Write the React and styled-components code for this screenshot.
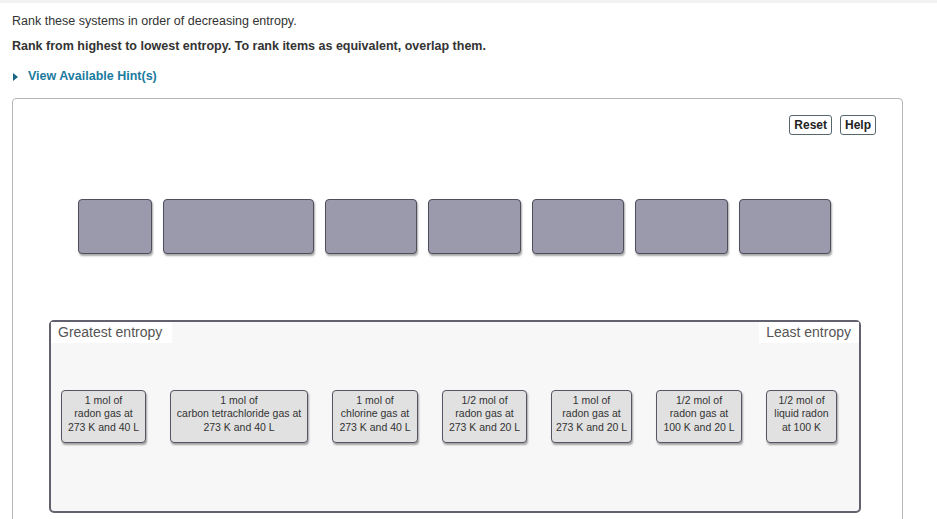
import React from "react";
import styled, { createGlobalStyle } from "styled-components";

const Global = createGlobalStyle`
  html, body { margin: 0; padding: 0; background: #fff; }
  body { font-family: "Liberation Sans", Arial, Helvetica, sans-serif; color: #333; }
  * { box-sizing: border-box; }
`;

const TopStrip = styled.div`
  height: 3px;
  background: #f2f2f2;
`;

const Content = styled.div`
  padding: 0 34px 0 12px;
`;

const Prompt = styled.p`
  margin: ${(p) => p.$mt}px 0 0;
  font-size: 12.5px;
  line-height: 15px;
  font-weight: ${(p) => (p.$bold ? 700 : 400)};
  color: #333;
`;

const Hint = styled.div`
  margin-top: 15px;
  display: flex;
  align-items: center;
  gap: 10px;
  font-size: 12.5px;
  line-height: 15px;
  font-weight: 700;
  color: #1b7b9f;
`;

const Triangle = styled.span`
  width: 0;
  height: 0;
  margin-left: 1px;
  border-top: 4.5px solid transparent;
  border-bottom: 4.5px solid transparent;
  border-left: 5px solid #1a6485;
`;

const Panel = styled.div`
  margin-top: 14px;
  border: 1px solid #b5b5b5;
  border-radius: 4px;
  padding: 16px 26px 30px 36px;
`;

const Toolbar = styled.div`
  display: flex;
  justify-content: flex-end;
  gap: 8px;
`;

const Button = styled.button`
  height: 20px;
  padding: 0 4px;
  border: 1px solid #56666d;
  border-radius: 3px;
  background: #fff;
  font-family: "Liberation Sans", Arial, sans-serif;
  font-weight: 700;
  font-size: 12px;
  color: #222;
  cursor: pointer;
`;

const SlotRow = styled.div`
  margin-top: 64px;
  padding-left: 29px;
  display: flex;
  gap: 11px;
`;

const Slot = styled.div`
  width: ${(p) => p.$w}px;
  height: 55px;
  background: #9b9aad;
  border: 1.5px solid #4f4f5c;
  border-radius: 4px;
  box-shadow: 1px 2px 2px rgba(0, 0, 0, 0.35);
`;

const RankBox = styled.div`
  margin-top: 66px;
  width: 812px;
  height: 193px;
  background: #f7f7f7;
  border: 2px solid #62626f;
  border-radius: 5px;
`;

const LabelRow = styled.div`
  display: flex;
  justify-content: space-between;
`;

const Label = styled.div`
  background: #fff;
  height: 21px;
  padding: 0 ${(p) => (p.$right ? 8 : 10)}px 0 7px;
  font-size: 14px;
  line-height: 20px;
  color: #555;
`;

const ItemRow = styled.div`
  margin-top: 47px;
  padding-left: 10px;
  display: flex;
  gap: 24px;
`;

const Item = styled.div`
  width: ${(p) => p.$w}px;
  height: 53px;
  padding-top: 3px;
  background: #e1e1e1;
  border: 1.5px solid #555566;
  border-radius: 4px;
  box-shadow: 1px 2px 2px rgba(0, 0, 0, 0.35);
  font-size: 10.5px;
  line-height: 13.3px;
  color: #333;
  text-align: center;
  white-space: nowrap;
`;

const slots = [74, 151, 92, 93, 92, 93, 92];

const items = [
  { w: 85, lines: ["1 mol of", "radon gas at", "273 K and 40 L"] },
  { w: 138, lines: ["1 mol of", "carbon tetrachloride gas at", "273 K and 40 L"] },
  { w: 86, lines: ["1 mol of", "chlorine gas at", "273 K and 40 L"] },
  { w: 85, lines: ["1/2 mol of", "radon gas at", "273 K and 20 L"] },
  { w: 81, lines: ["1 mol of", "radon gas at", "273 K and 20 L"] },
  { w: 86, lines: ["1/2 mol of", "radon gas at", "100 K and 20 L"] },
  { w: 71, lines: ["1/2 mol of", "liquid radon", "at 100 K"] },
];

export default function App() {
  return (
    <>
      <Global />
      <TopStrip />
      <Content>
        <Prompt $mt={11}>Rank these systems in order of decreasing entropy.</Prompt>
        <Prompt $mt={10} $bold>
          Rank from highest to lowest entropy. To rank items as equivalent, overlap them.
        </Prompt>
        <Hint>
          <Triangle />
          View Available Hint(s)
        </Hint>
        <Panel>
          <Toolbar>
            <Button>Reset</Button>
            <Button>Help</Button>
          </Toolbar>
          <SlotRow>
            {slots.map((w, i) => (
              <Slot key={i} $w={w} />
            ))}
          </SlotRow>
          <RankBox>
            <LabelRow>
              <Label>Greatest entropy</Label>
              <Label $right>Least entropy</Label>
            </LabelRow>
            <ItemRow>
              {items.map((it, i) => (
                <Item key={i} $w={it.w}>
                  {it.lines.map((l, j) => (
                    <div key={j}>{l}</div>
                  ))}
                </Item>
              ))}
            </ItemRow>
          </RankBox>
        </Panel>
      </Content>
    </>
  );
}
